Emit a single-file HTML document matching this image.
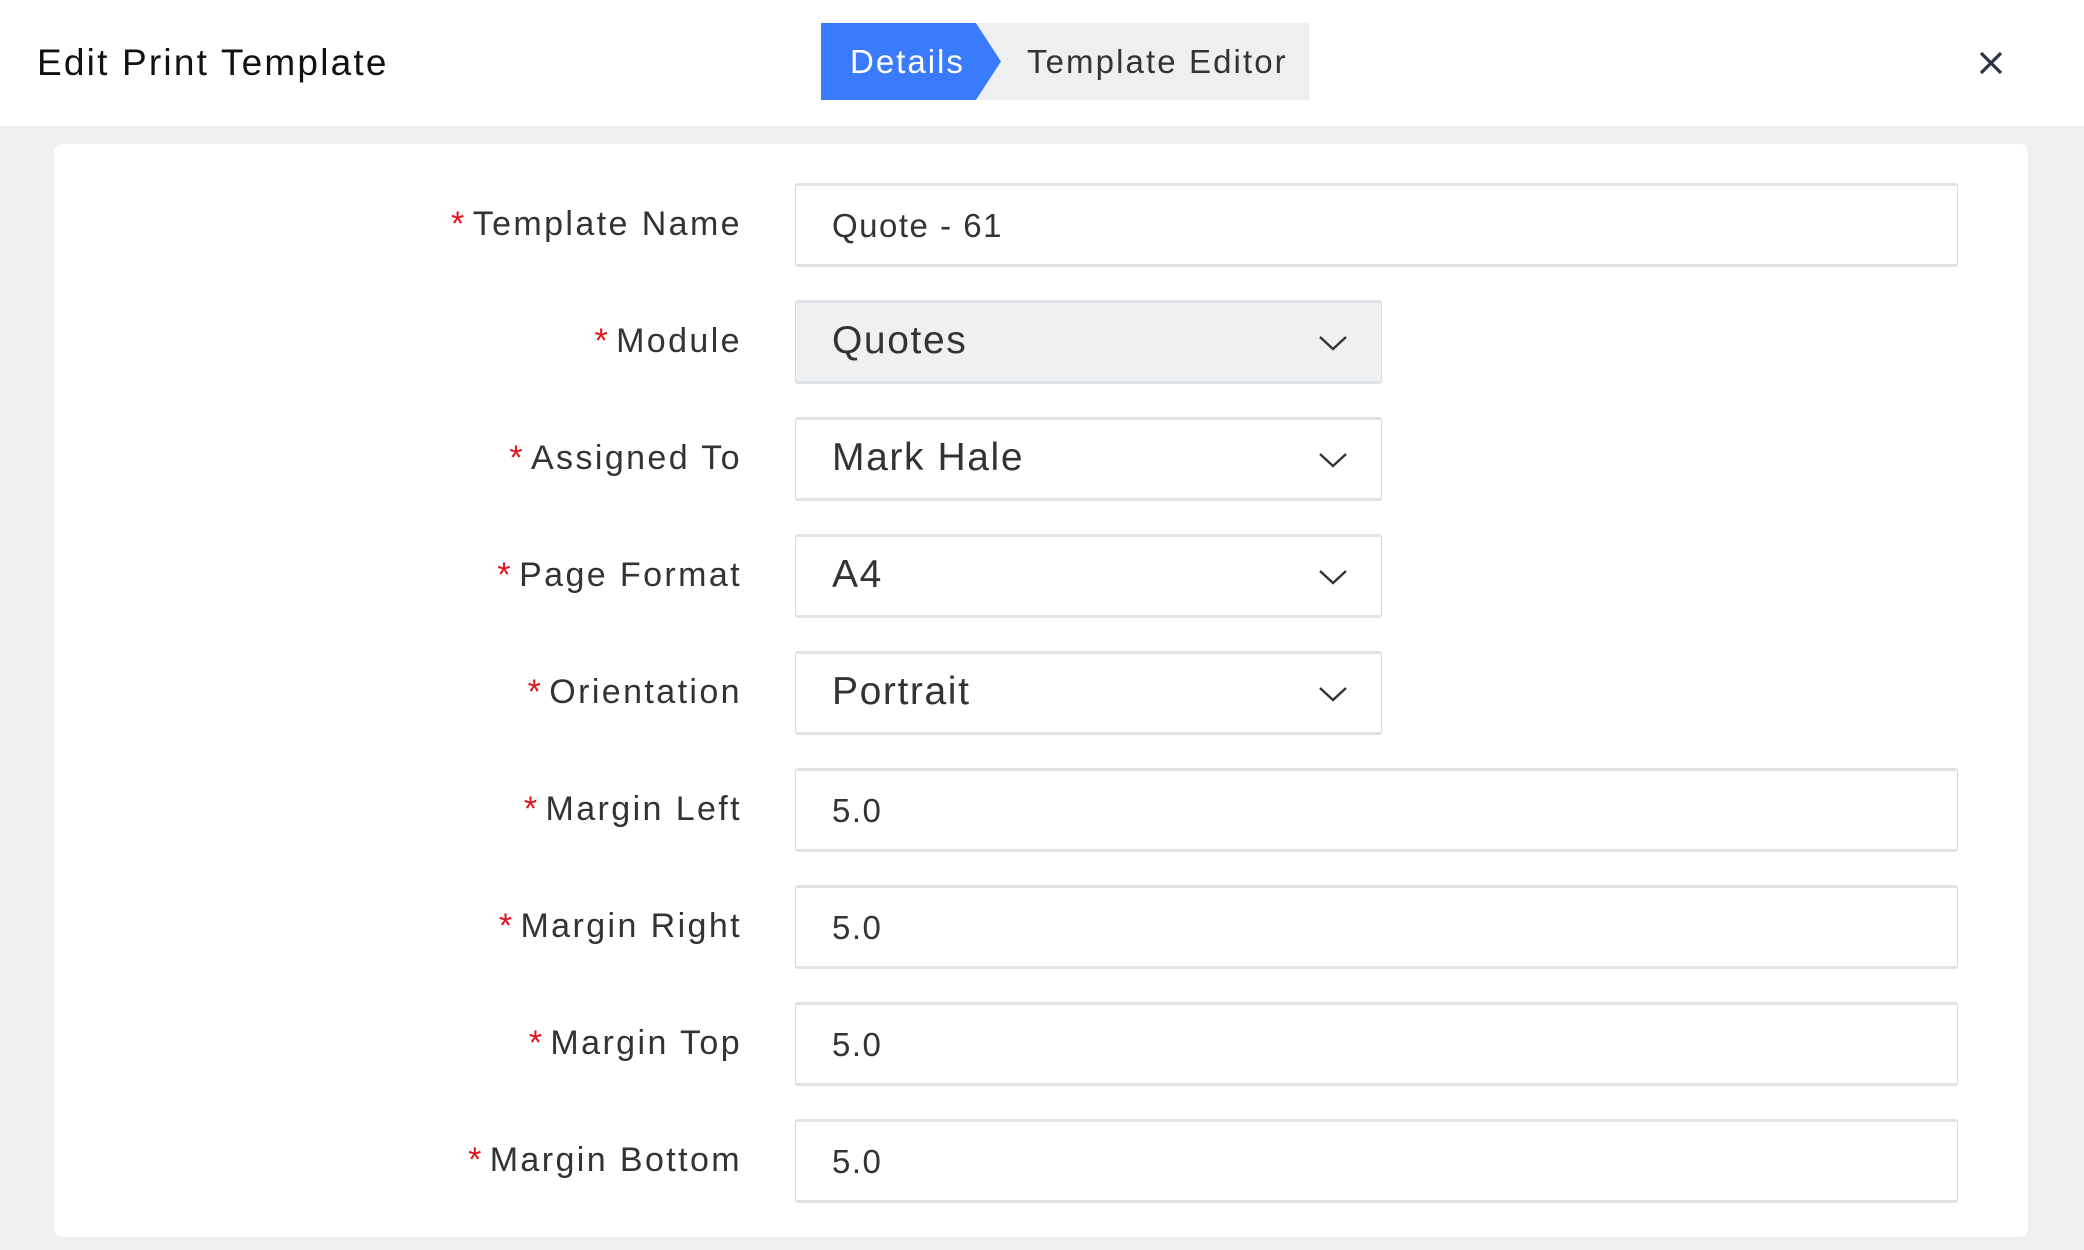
<!DOCTYPE html>
<html><head><style>
*{box-sizing:border-box;margin:0;padding:0}
body{width:2084px;height:1250px;background:#eff0f2;font-family:"Liberation Sans",sans-serif;position:relative;overflow:hidden;color:#333}
.hdr{position:absolute;left:0;top:0;width:2084px;height:126px;background:#fff}
.title{position:absolute;left:37px;top:42px;font-size:37px;color:#111;letter-spacing:2.2px}
.tab1{position:absolute;left:821px;top:23px;height:77px;width:180px;background:#3a7bfd;clip-path:polygon(0 0,155px 0,180px 50%,155px 100%,0 100%);color:#fff;font-size:33px;line-height:77px;padding-left:29px;letter-spacing:2px;z-index:1}
.tab2{position:absolute;left:977px;top:23px;height:77px;width:332px;background:#eeeff1;clip-path:polygon(0 0,100% 0,100% 100%,0 100%,24px 50%);color:#333;font-size:33px;line-height:77px;padding-left:50px;letter-spacing:2.1px}
.card{position:absolute;left:54px;top:144px;width:1974px;height:1093px;background:#fff;border-radius:8px}
.lbl{position:absolute;right:1342px;font-size:34px;color:#333;white-space:nowrap;line-height:82px;letter-spacing:2.4px}
.lbl b{color:#e0131c;font-weight:normal;margin-right:6px}
.in{position:absolute;left:795px;width:1163px;height:84px;border:1px solid #d6d9dd;border-top:3px solid #dfe2e6;border-bottom:3px solid #dfe2e6;border-radius:3px;background:#fff;font-size:33px;line-height:80px;padding-left:36px;color:#333;letter-spacing:1.5px}
.sel{width:587px;font-size:39px;line-height:76px;letter-spacing:1.6px}
.sel svg{position:absolute;right:34px;top:32px}
</style></head><body>
<div class="hdr">
<div class="title">Edit Print Template</div>
<div class="tab2">Template Editor</div>
<div class="tab1">Details</div>
<svg style="position:absolute;left:1979px;top:51px" width="24" height="24" viewBox="0 0 24 24"><path d="M2 2L22 22M22 2L2 22" stroke="#2b3440" stroke-width="3.2"/></svg>
</div>
<div class="card"></div>

<div class="lbl" style="top:183px"><b>*</b>Template Name</div>
<div class="in" style="top:183px">Quote - 61</div>

<div class="lbl" style="top:300px"><b>*</b>Module</div>
<div class="in sel" style="top:300px;background:#eff0f2">Quotes<svg width="28" height="16" viewBox="0 0 28 16"><path d="M1 2L14 14L27 2" fill="none" stroke="#333" stroke-width="2.4"/></svg></div>

<div class="lbl" style="top:417px"><b>*</b>Assigned To</div>
<div class="in sel" style="top:417px">Mark Hale<svg width="28" height="16" viewBox="0 0 28 16"><path d="M1 2L14 14L27 2" fill="none" stroke="#333" stroke-width="2.4"/></svg></div>

<div class="lbl" style="top:534px"><b>*</b>Page Format</div>
<div class="in sel" style="top:534px">A4<svg width="28" height="16" viewBox="0 0 28 16"><path d="M1 2L14 14L27 2" fill="none" stroke="#333" stroke-width="2.4"/></svg></div>

<div class="lbl" style="top:651px"><b>*</b>Orientation</div>
<div class="in sel" style="top:651px">Portrait<svg width="28" height="16" viewBox="0 0 28 16"><path d="M1 2L14 14L27 2" fill="none" stroke="#333" stroke-width="2.4"/></svg></div>

<div class="lbl" style="top:768px"><b>*</b>Margin Left</div>
<div class="in" style="top:768px">5.0</div>

<div class="lbl" style="top:885px"><b>*</b>Margin Right</div>
<div class="in" style="top:885px">5.0</div>

<div class="lbl" style="top:1002px"><b>*</b>Margin Top</div>
<div class="in" style="top:1002px">5.0</div>

<div class="lbl" style="top:1119px"><b>*</b>Margin Bottom</div>
<div class="in" style="top:1119px">5.0</div>
</body></html>
